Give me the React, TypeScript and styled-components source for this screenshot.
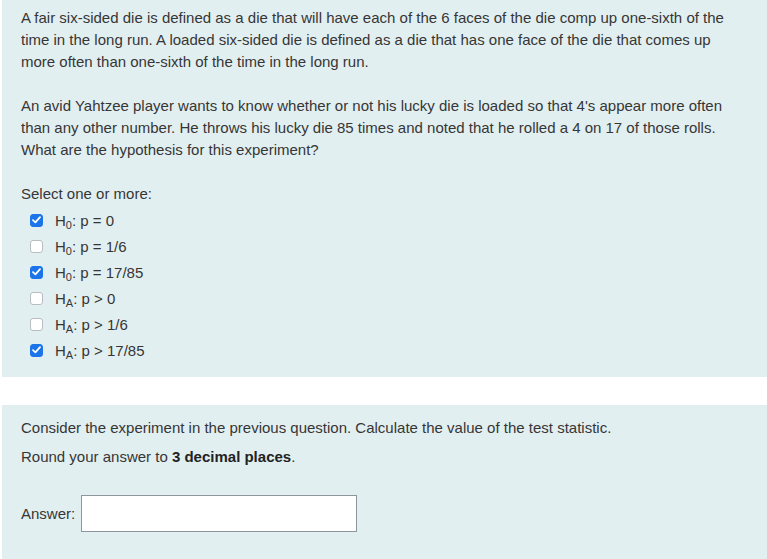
import React from "react";
import styled, { createGlobalStyle } from "styled-components";

const Global = createGlobalStyle`
  html, body { margin: 0; padding: 0; background: #fff; }
  body { font-family: "Liberation Sans", Arial, sans-serif; color: #363636; font-size: 15px; }
  * { box-sizing: border-box; }
`;

const Page = styled.div`
  width: 767px;
  padding-left: 2px;
  display: flex;
  flex-direction: column;
  gap: 28px;
`;

const Panel = styled.section<{ $pb: number; $pt: number }>`
  background: #e2eff1;
  padding: ${(p) => p.$pt}px 22px ${(p) => p.$pb}px 19px;
`;

const Para = styled.p<{ $mb?: number }>`
  margin: 0 0 ${(p) => p.$mb ?? 0}px 0;
  line-height: 22px;
  font-size: 15px;
`;

const Prompt = styled.div`
  line-height: 22px;
  margin-bottom: 2px;
`;

const Options = styled.div`
  display: flex;
  flex-direction: column;
`;

const Option = styled.label`
  display: flex;
  align-items: center;
  height: 26px;
  padding-left: 9px;
  gap: 12px;
`;

const Box = styled.span<{ $checked: boolean }>`
  width: 13px;
  height: 13px;
  border-radius: 3px;
  display: inline-flex;
  align-items: center;
  justify-content: center;
  background: ${(p) => (p.$checked ? "#1b74ea" : "#fff")};
  border: 1px solid ${(p) => (p.$checked ? "#1b74ea" : "#b9bcc0")};
`;

const Sub = styled.sub`
  font-size: 11px;
  vertical-align: -3px;
  line-height: 0;
`;

const Strong = styled.strong`
  font-weight: 700;
  color: #222;
`;

const AnswerRow = styled.div`
  display: flex;
  align-items: center;
  gap: 6px;
  margin-top: 27px;
`;

const Input = styled.div`
  width: 276px;
  height: 37px;
  background: #fff;
  border: 1px solid #8f959e;
`;

const Check = () => (
  <svg width="9" height="8" viewBox="0 0 9 8">
    <path d="M1 4.2 L3.4 6.4 L8 1.2" fill="none" stroke="#fff" strokeWidth="1.8" strokeLinecap="round" strokeLinejoin="round" />
  </svg>
);

const opts: { h: string; rest: string; checked: boolean }[] = [
  { h: "0", rest: ": p = 0", checked: true },
  { h: "0", rest: ": p = 1/6", checked: false },
  { h: "0", rest: ": p = 17/85", checked: true },
  { h: "A", rest: ": p > 0", checked: false },
  { h: "A", rest: ": p > 1/6", checked: false },
  { h: "A", rest: ": p > 17/85", checked: true },
];

export default function App() {
  return (
    <>
      <Global />
      <Page>
        <Panel $pt={7} $pb={14}>
          <Para $mb={22}>
            A fair six-sided die is defined as a die that will have each of the 6 faces of the die comp up one-sixth of the
            time in the long run. A loaded six-sided die is defined as a die that has one face of the die that comes up
            more often than one-sixth of the time in the long run.
          </Para>
          <Para $mb={22}>
            An avid Yahtzee player wants to know whether or not his lucky die is loaded so that 4's appear more often
            than any other number. He throws his lucky die 85 times and noted that he rolled a 4 on 17 of those rolls.
            What are the hypothesis for this experiment?
          </Para>
          <Prompt>Select one or more:</Prompt>
          <Options>
            {opts.map((o, i) => (
              <Option key={i}>
                <Box $checked={o.checked}>{o.checked && <Check />}</Box>
                <span>
                  H<Sub>{o.h}</Sub>
                  {o.rest}
                </span>
              </Option>
            ))}
          </Options>
        </Panel>
        <Panel $pt={12} $pb={28}>
          <Para $mb={7}>Consider the experiment in the previous question. Calculate the value of the test statistic.</Para>
          <Para>
            Round your answer to <Strong>3 decimal places</Strong>.
          </Para>
          <AnswerRow>
            <span>Answer:</span>
            <Input />
          </AnswerRow>
        </Panel>
      </Page>
    </>
  );
}
